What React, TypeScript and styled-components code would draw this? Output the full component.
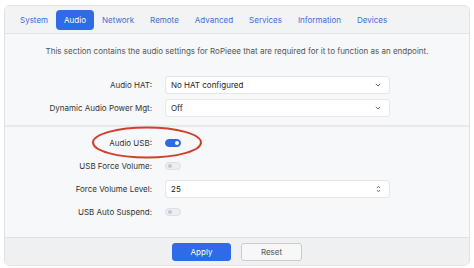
import React from "react";
import styled, { createGlobalStyle } from "styled-components";

const GlobalStyle = createGlobalStyle`
  body {
    margin: 0;
    background: #ffffff;
    font-family: Inter, "Noto Sans", sans-serif;
    font-size: 8px;
    color: #333;
  }
`;

const Card = styled.div`
  margin: 5px 4px 0;
  width: 466px;
  box-sizing: border-box;
  border: 1px solid #dfe1e5;
  border-radius: 6px;
  background: #f7f8fa;
  overflow: hidden;
`;

const TabBar = styled.div`
  display: flex;
  align-items: center;
  height: 27px;
  padding-left: 7px;
  background: #f2f3f5;
  border-bottom: 1px solid #e1e3e7;
`;

const Tab = styled.div<{ $active?: boolean }>`
  height: 20px;
  line-height: 20px;
  padding: 0 8px;
  border-radius: 4px;
  color: ${(p) => (p.$active ? "#ffffff" : "#3a6fd8")};
  background: ${(p) => (p.$active ? "#2f6be8" : "transparent")};
`;

const Section = styled.div<{ $top: number; $bottom: number }>`
  padding: ${(p) => p.$top}px 0 ${(p) => p.$bottom}px;
  display: flex;
  flex-direction: column;
  gap: 5px;
`;

const Divider = styled.div`
  height: 2px;
  background: #e8e9ec;
`;

const Description = styled.p`
  margin: 0 0 14px;
  text-align: center;
  color: #555;
  line-height: 12px;
`;

const Row = styled.div`
  position: relative;
  display: grid;
  grid-template-columns: 147px 225px;
  column-gap: 13px;
  align-items: center;
  min-height: 18px;
`;

const Label = styled.label`
  text-align: right;
  color: #333;
`;

const Select = styled.div`
  height: 18px;
  box-sizing: border-box;
  display: flex;
  align-items: center;
  justify-content: space-between;
  padding: 0 8px 0 5px;
  background: #ffffff;
  border: 1px solid #e4e6ea;
  border-radius: 3px;
  color: #222;
`;

const Toggle = styled.div<{ $on?: boolean }>`
  position: relative;
  width: 16px;
  height: 8px;
  box-sizing: border-box;
  border-radius: 5px;
  background: ${(p) => (p.$on ? "#2f6be8" : "#eceef1")};
  border: 1px solid ${(p) => (p.$on ? "#2f6be8" : "#dcdfe3")};
  &::after {
    content: "";
    position: absolute;
    top: 1px;
    left: ${(p) => (p.$on ? "9px" : "2px")};
    width: 4px;
    height: 4px;
    border-radius: 50%;
    background: ${(p) => (p.$on ? "#ffffff" : "#c4c7cc")};
  }
`;

const Ring = styled.svg`
  position: absolute;
  left: 86px;
  top: -8px;
  pointer-events: none;
`;

const Footer = styled.div`
  display: flex;
  justify-content: center;
  gap: 10px;
  padding: 5px 0 4px;
  background: #eff0f2;
  border-top: 1px solid #dfe1e5;
`;

const Button = styled.button<{ $primary?: boolean }>`
  width: ${(p) => (p.$primary ? "59px" : "61px")};
  height: 18px;
  font-family: inherit;
  font-size: 8px;
  border-radius: 3px;
  cursor: pointer;
  color: ${(p) => (p.$primary ? "#ffffff" : "#555")};
  background: ${(p) => (p.$primary ? "#2f6be8" : "#f7f7f8")};
  border: 1px solid ${(p) => (p.$primary ? "#2f6be8" : "#c9cbcf")};
`;

const Chevron = () => (
  <svg width="6" height="4" viewBox="0 0 6 4">
    <path d="M0.8 0.8 L3 3 L5.2 0.8" fill="none" stroke="#555" strokeWidth="0.9" />
  </svg>
);

const Spinner = () => (
  <svg width="5" height="8" viewBox="0 0 5 8">
    <path d="M1 3 L2.5 1.2 L4 3" fill="none" stroke="#666" strokeWidth="0.9" />
    <path d="M1 5 L2.5 6.8 L4 5" fill="none" stroke="#666" strokeWidth="0.9" />
  </svg>
);

const tabs = ["System", "Audio", "Network", "Remote", "Advanced", "Services", "Information", "Devices"];

export default function App() {
  return (
    <>
      <GlobalStyle />
      <Card>
        <TabBar>
          {tabs.map((t) => (
            <Tab key={t} $active={t === "Audio"}>
              {t}
            </Tab>
          ))}
        </TabBar>
        <Section $top={11} $bottom={8}>
          <Description>
            This section contains the audio settings for RoPieee that are required for it to function as an endpoint.
          </Description>
          <Row>
            <Label>Audio HAT:</Label>
            <Select>
              No HAT configured
              <Chevron />
            </Select>
          </Row>
          <Row>
            <Label>Dynamic Audio Power Mgt:</Label>
            <Select>
              Off
              <Chevron />
            </Select>
          </Row>
        </Section>
        <Divider />
        <Section $top={7} $bottom={16}>
          <Row>
            <Label>Audio USB:</Label>
            <Toggle $on />
            <Ring width="112" height="33" viewBox="0 0 112 33">
              <ellipse cx="56" cy="16.5" rx="54" ry="15" fill="none" stroke="#d0402f" strokeWidth="2" />
            </Ring>
          </Row>
          <Row>
            <Label>USB Force Volume:</Label>
            <Toggle />
          </Row>
          <Row>
            <Label>Force Volume Level:</Label>
            <Select>
              25
              <Spinner />
            </Select>
          </Row>
          <Row>
            <Label>USB Auto Suspend:</Label>
            <Toggle />
          </Row>
        </Section>
        <Footer>
          <Button $primary>Apply</Button>
          <Button>Reset</Button>
        </Footer>
      </Card>
    </>
  );
}
